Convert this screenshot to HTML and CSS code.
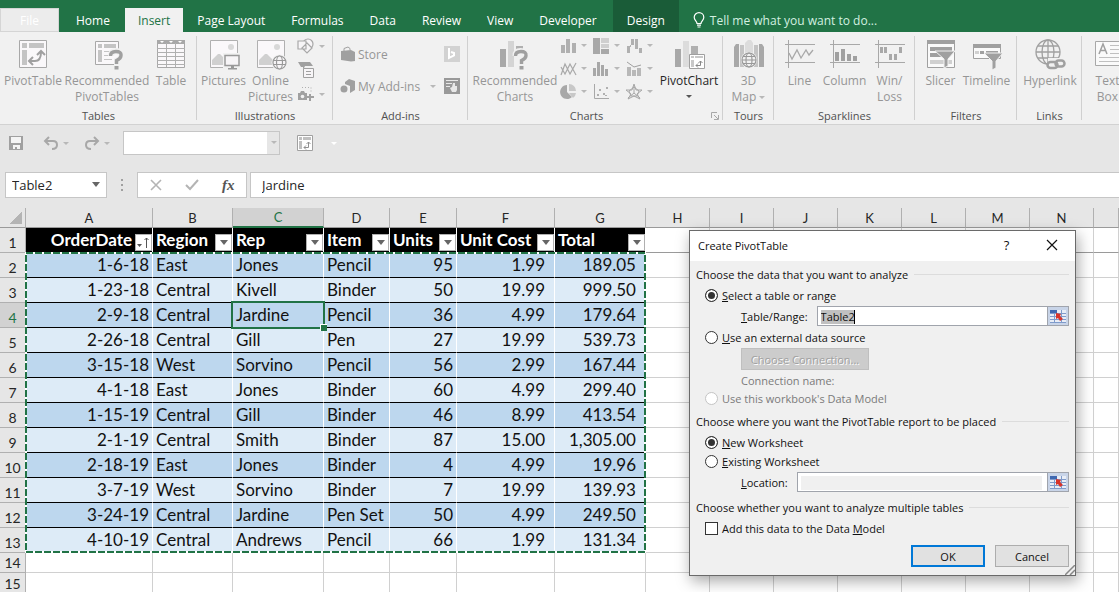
FILE: index.html
```html
<!DOCTYPE html>
<html lang="en">
<head>
    <meta charset="UTF-8">
    <meta name="viewport" content="width=device-width, initial-scale=1.0">
    <title>Create PivotTable</title>
    <link rel="stylesheet" href="styles.css">
</head>
<body>
    <nav class="tabs">
        <button class="tab file">File</button>
        <button class="tab">Home</button>
        <button class="tab active">Insert</button>
        <button class="tab">Page Layout</button>
        <button class="tab">Formulas</button>
        <button class="tab">Data</button>
        <button class="tab">Review</button>
        <button class="tab">View</button>
        <button class="tab">Developer</button>
        <button class="tab design">Design</button>
        <button class="tell-me">
            <svg width="12" height="16" viewBox="0 0 12 16" fill="none" stroke="#fff" stroke-width="1.2"><path d="M4 11.5C4 9 1.200 8.500 1.200 5.300a4.800 4.600 0 0 1 9.600 0C10.800 8.500 8 9 8 11.500zM4 13.200h4M4.500 15h3"/></svg>
            Tell me what you want to do...
        </button>
    </nav>

    <div class="ribbon">
        <section class="group g-tables">
            <div class="items">
                <button class="big w60">
                    <svg width="32" height="32" viewBox="0 0 32 32"><path fill="#faf8fa" stroke="#a8a8a8" d="M2.500 2.500h27v27h-27z"/><path fill="#c4c4c4" d="M5 5h5v5H5zM12 5h15v5H12zM5 12h5v15H5z"/><path fill="none" stroke="#a0a0a0" stroke-width="2" d="M13 23h5q6 0 6-9M16 19l-4 4 4 4M20 17l4-4 4 4"/></svg>
                    <span>PivotTable</span>
                </button>
                <button class="big w88">
                    <svg width="32" height="32" viewBox="0 0 32 32"><path fill="#faf8fa" stroke="#a8a8a8" d="M4.500 3.500h23v23h-23z"/><path fill="#c4c4c4" d="M7 6h4v4H7zM13 6h12v4H13zM7 12h4v12H7z"/><path stroke="#c4c4c4" d="M13 13.500h12M13 17.500h8M13 21.500h8"/><path fill="none" stroke="#f1f1f1" stroke-width="6" d="M20 18q0-5 5-5t5 5q0 3-4 4.500V27"/><path fill="none" stroke="#a0a0a0" stroke-width="3.400" d="M19.500 18q0-4.500 5.500-4.500t5 4q0 3-4.500 5V26"/><path fill="#a0a0a0" d="M23.500 28h4v3.500h-4z"/></svg>
                    <span>Recommended PivotTables</span>
                </button>
                <button class="big w40">
                    <svg width="32" height="32" viewBox="0 0 32 32"><path fill="#faf8fa" stroke="#a8a8a8" d="M2.500 2.500h27v27h-27z"/><path fill="#a8a8a8" d="M2 2h28v4H2z"/><path fill="none" stroke="#b0b0b0" d="M2 10.500h28M2 14.500h28M2 18.500h28M2 22.500h28M2 26.500h28M11.500 5v24M20.500 5v24"/><path fill="#fff" d="M5 3h4L7 5zM14 3h4l-2 2zM23 3h4l-2 2z"/></svg>
                    <span>Table</span>
                </button>
            </div>
            <h2>Tables</h2>
        </section>

        <section class="group g-illustrations">
            <div class="items">
                <button class="big w47">
                    <svg width="32" height="32" viewBox="0 0 32 32"><path fill="#faf8fa" stroke="#b0b0b0" d="M2.500 2.500h27v27h-27z"/><path fill="#d0d0d0" d="M4 27v-5l6-6h2l8 8v3z"/><circle cx="23" cy="9" r="3" fill="#d8d8d8"/><path fill="#f7f5f7" stroke="#f1f1f1" stroke-width="4" d="M17 17h15v11H17z"/><path fill="#f7f5f7" stroke="#999" stroke-width="1.500" d="M17 17.500h14v10H17z"/><path fill="#999" d="M23 28h3v2h3v1.500h-9V30h3z"/></svg>
                    <span>Pictures</span>
                </button>
                <button class="big w47">
                    <svg width="32" height="32" viewBox="0 0 32 32"><path fill="#faf8fa" stroke="#b0b0b0" d="M2.500 2.500h27v27h-27z"/><path fill="#d0d0d0" d="M4 27v-5l6-6h2l8 8v3z"/><circle cx="22" cy="9" r="3" fill="#d8d8d8"/><circle cx="24.500" cy="24.500" r="8" fill="#f1f1f1"/><g fill="#f7f5f7" stroke="#999" stroke-width="1.200"><circle cx="24.500" cy="24.500" r="6.500"/><ellipse cx="24.500" cy="24.500" rx="3" ry="6.500"/><path d="M18 22.500h13M18 26.500h13"/></g></svg>
                    <span>Online Pictures</span>
                </button>
                <div class="small-stack">
                    <button class="mini caret" aria-label="Shapes"><svg width="18" height="16" viewBox="0 0 18 16" fill="#f7f5f7" stroke="#a8a8a8" stroke-width="1.200"><circle cx="11" cy="6" r="5"/><path d="M1 3h8v8H1zM10 5l5 5-5 5-5-5z"/></svg></button>
                    <button class="mini" aria-label="SmartArt"><svg width="18" height="18" viewBox="0 0 18 18"><path fill="#a0a0a0" d="M1 1h12l3 4H8L6 9V6H4z"/><path fill="#f7f5f7" stroke="#a0a0a0" d="M6.500 7.500h10v9h-10zM9 10.500h5M9 13.500h5"/></svg></button>
                    <button class="mini caret" aria-label="Screenshot"><svg width="18" height="16" viewBox="0 0 18 16"><path fill="none" stroke="#b0b0b0" stroke-dasharray="1 2" d="M5 1.500h9v6"/><path fill="#a0a0a0" d="M1 7h2l1-2h3l1 2h2v7H1zM12 8h2v2h3v2h-3v3h-2v-3h-2v-2h2z"/><circle cx="5.500" cy="10.500" r="1.800" fill="#f1f1f1"/></svg></button>
                </div>
            </div>
            <h2>Illustrations</h2>
        </section>

        <section class="group g-addins">
            <div class="addins">
                <button class="line"><svg width="16" height="16" viewBox="0 0 16 16"><path fill="#a0a0a0" d="M1 5l10-1 4 2v9l-4 .5L1 14z"/><path fill="none" stroke="#a0a0a0" d="M4 5V2.500L8 1l2 1.500V4"/></svg>Store</button>
                <button class="mini" aria-label="Bing Maps"><svg width="16" height="16" viewBox="0 0 16 16"><path fill="#d2d2d2" d="M0 0h16v16H0z"/><path fill="none" stroke="#fff" stroke-width="2" d="M5 2v10l5-2.500V7L7 6"/></svg></button>
                <button class="line caret"><svg width="16" height="16" viewBox="0 0 16 16"><path fill="#a0a0a0" d="M5 4l4-3 6 2v9l-5 3V8L5 6z"/><circle cx="4" cy="11" r="3.500" fill="#a0a0a0"/></svg>My Add-ins</button>
                <button class="mini" aria-label="People Graph"><svg width="16" height="16" viewBox="0 0 16 16"><path fill="#999" d="M0 0h16v16H0z"/><path fill="#e8e8e8" d="M2 2h12v1H2zM2 5h6v1H2zM2 8h4v1H2zM9 5h2v3h2v4l-1 2H8l-2-4 2-1z"/></svg></button>
            </div>
            <h2>Add-ins</h2>
        </section>

        <section class="group g-charts">
            <div class="items">
                <button class="big w88">
                    <svg width="32" height="32" viewBox="0 0 32 32"><path fill="#a8a8a8" d="M1 11h6v18H1z"/><path fill="#d4d4d4" d="M9 3h6v26H9z"/><path fill="#b0b0b0" d="M17 8h7v8h-7z"/><path fill="none" stroke="#f1f1f1" stroke-width="6" d="M16.500 18q0-5 5-5t5 5q0 3-4 4.500V27"/><path fill="none" stroke="#a0a0a0" stroke-width="3.400" d="M16.500 18q0-4.500 5.500-4.500t5 4q0 3-4.500 5V26"/><path fill="#a0a0a0" d="M20.500 28h4v3.500h-4z"/></svg>
                    <span>Recommended Charts</span>
                </button>
                <div class="chart-grid">
                    <button class="mini caret" aria-label="Column chart"><svg width="17" height="16" viewBox="0 0 17 16"><path fill="#b0b0b0" d="M1 7h4v8H1zM6 1h4v14H6zM12 5h4v10h-4z"/></svg></button>
                    <button class="mini caret" aria-label="Hierarchy chart"><svg width="17" height="16" viewBox="0 0 17 16"><path fill="#a8a8a8" d="M0 0h7v16H0zM8 11h8v5H8z"/><path fill="#cfcfcf" d="M8 0h8v5H8zM8 6h8v4H8z"/></svg></button>
                    <button class="mini caret" aria-label="Waterfall chart"><svg width="17" height="16" viewBox="0 0 17 16"><path fill="#b0b0b0" d="M1 8h3v7H1zM5 1h3v6H5zM9 1h3v10H9zM13 10h3v5h-3zM4 7h1v2H4z"/></svg></button>
                    <button class="mini caret" aria-label="Line chart"><svg width="17" height="16" viewBox="0 0 17 16"><path fill="none" stroke="#a8a8a8" stroke-width="1.200" d="M1 14L5 3l5 10 6-11M1 6l4 7 5-10 6 11"/></svg></button>
                    <button class="mini caret" aria-label="Statistic chart"><svg width="17" height="16" viewBox="0 0 17 16"><path fill="#a8a8a8" d="M0 7h3v8H0zM4 1h3v14H4zM8 4h3v11H8zM12 8h3v7h-3z"/></svg></button>
                    <button class="mini caret" aria-label="Combo chart"><svg width="17" height="16" viewBox="0 0 17 16"><path fill="#b8b8b8" d="M1 6h4v9H1zM6 9h4v6H6zM11 7h4v8h-4z"/><path fill="none" stroke="#a0a0a0" d="M1 1l7 5 7-2"/></svg></button>
                    <button class="mini caret" aria-label="Pie chart"><svg width="17" height="16" viewBox="0 0 17 16"><path fill="#a8a8a8" d="M7 1v7l5 5A7 7 0 1 1 7 1z"/><path fill="#c8c8c8" d="M9 0a7 7 0 0 1 7 7H9zM16 9a7 7 0 0 1-3 5l-4-5z"/></svg></button>
                    <button class="mini caret" aria-label="Scatter chart"><svg width="17" height="16" viewBox="0 0 17 16"><path fill="none" stroke="#a8a8a8" d="M1.500 0v14.500H16"/><path fill="#b0b0b0" d="M4 10h2v2H4zM6 5h2v2H6zM10 9h2v2h-2zM13 3h2v2h-2zM12 11h2v1h-2z"/></svg></button>
                    <button class="mini caret" aria-label="Radar chart"><svg width="17" height="16" viewBox="0 0 17 16"><path fill="none" stroke="#a8a8a8" d="M8 0l2 6h6l-5 4 3 5-6-3-6 3 3-5-5-4h6zM8 3l5 4-2 5H5L3 7zM8 1v8M8 9l6 5M8 9l-6 5"/></svg></button>
                </div>
                <button class="big w60 enabled">
                    <svg width="32" height="32" viewBox="0 0 32 32"><path fill="#a8a8a8" d="M2 11h6v18H2z"/><path fill="#dcdcdc" d="M10 3h6v26h-6z"/><path fill="#b0b0b0" d="M18 8h7v8h-7z"/><path fill="#fff" stroke="#a0a0a0" d="M16.500 16.500h15v14h-15z"/><path fill="#c8c8c8" d="M18 18h3v2h-3zM22 18h8v2h-8zM18 22h3v7h-3z"/><path fill="none" stroke="#888" d="M23 27.500h4.500V23M25 25.500l-2 2 2 2M25.500 25l2-2 2 2"/></svg>
                    <span>PivotChart</span>
                    <i class="arrow"></i>
                </button>
            </div>
            <svg class="launcher" width="8" height="8" viewBox="0 0 8 8" fill="none" stroke="#a8a8a8"><path d="M.5 6V.500H6M3 3l4 4M7.500 3v4.500H3"/></svg>
            <h2>Charts</h2>
        </section>

        <section class="group g-tours">
            <div class="items">
                <button class="big w45">
                    <svg width="32" height="32" viewBox="0 0 32 32"><path fill="#a8a8a8" d="M1 9l2-3h3v23H1z"/><path fill="#c4c4c4" d="M7 7h4v22H7zM21 7h4v22h-4z"/><path fill="#dcdcdc" d="M12 5l3-3h3l2 3v12h-8z"/><path fill="#a8a8a8" d="M26 6h3l2 3v20h-5z"/><circle cx="16" cy="22" r="8" fill="#f1f1f1"/><g fill="none" stroke="#999" stroke-width="1.200"><circle cx="16" cy="22" r="7"/><ellipse cx="16" cy="22" rx="3" ry="7"/><path d="M9 22h14M10 18.500h12M10 25.500h12"/></g></svg>
                    <span>3D<br>Map <i class="tiny"></i></span>
                </button>
            </div>
            <h2>Tours</h2>
        </section>

        <section class="group g-spark">
            <div class="items">
                <button class="big w45">
                    <svg width="32" height="32" viewBox="0 0 32 32" fill="none" stroke="#a8a8a8"><path d="M1 6.500h30M1 24.500h30M4.500 2v28"/><path stroke-width="1.300" d="M5 15l3 6 5-9 4 8 5-8 3 5 4-5"/></svg>
                    <span>Line</span>
                </button>
                <button class="big w45">
                    <svg width="32" height="32" viewBox="0 0 32 32"><path stroke="#a8a8a8" d="M1 6.500h30M1 24.500h30M4.500 2v28"/><path fill="#a0a0a0" d="M6 14h4v9H6zM12 11h4v12h-4zM18 16h4v7h-4zM24 18h4v5h-4z"/></svg>
                    <span>Column</span>
                </button>
                <button class="big w45">
                    <svg width="32" height="32" viewBox="0 0 32 32"><path stroke="#a8a8a8" d="M1 6.500h30M1 24.500h30M4.500 2v28"/><path fill="#a8a8a8" d="M6 9h3v6H6zM10 9h3v6h-3zM15 16h3v6h-3zM20 16h3v6h-3zM25 9h3v6h-3z"/></svg>
                    <span>Win/<br>Loss</span>
                </button>
            </div>
            <h2>Sparklines</h2>
        </section>

        <section class="group g-filters">
            <div class="items">
                <button class="big w45">
                    <svg width="32" height="32" viewBox="0 0 32 32"><path fill="#fafafa" stroke="#a0a0a0" d="M2.500 2.500h27v27h-27z"/><path fill="#a0a0a0" d="M2 2h28v4H2zM5 9h22v4H5zM5 15h12v4H5z"/><path fill="#d0d0d0" d="M5 22h22v4H5z"/><path fill="#a0a0a0" stroke="#f1f1f1" d="M10 13h20l-7 8v7l-4 2v-9z"/></svg>
                    <span>Slicer</span>
                </button>
                <button class="big w47">
                    <svg width="32" height="32" viewBox="0 0 32 32"><path fill="#fafafa" stroke="#a0a0a0" d="M2.500 6.500h27v14h-27z"/><path fill="#a0a0a0" d="M2 6h28v4H2zM9 13h4v3H9zM15 13h12v3H15z"/><path fill="#d0d0d0" d="M4 13h4v3H4z"/><path fill="#a0a0a0" stroke="#f1f1f1" d="M13 15h19l-7 8v7l-4 2v-9z"/></svg>
                    <span>Timeline</span>
                </button>
            </div>
            <h2>Filters</h2>
        </section>

        <section class="group g-links">
            <div class="items">
                <button class="big w60">
                    <svg width="32" height="32" viewBox="0 0 32 32" fill="none" stroke="#a0a0a0"><g stroke-width="1.300"><circle cx="14" cy="14" r="12"/><ellipse cx="14" cy="14" rx="6" ry="12"/><path d="M2 14h24M4 8h20M4 20h20M14 2v24"/></g><path stroke="#f1f1f1" stroke-width="6" d="M17 23h12v6H17z"/><g stroke-width="2.500"><rect x="13.500" y="24" width="10" height="6" rx="3"/><rect x="21.500" y="22.500" width="9" height="6" rx="3"/></g></svg>
                    <span>Hyperlink</span>
                </button>
            </div>
            <h2>Links</h2>
        </section>

        <section class="group g-text">
            <div class="items">
                <button class="big w45">
                    <svg width="32" height="32" viewBox="0 0 32 32"><path fill="#fafafa" stroke="#a8a8a8" d="M3.500 3.500h28v24h-28z"/><path fill="none" stroke="#a0a0a0" stroke-width="1.500" d="M7 16l4-10 4 10M8.500 12.500h5"/><path stroke="#c0c0c0" d="M18 7.500h11M18 11.500h11M18 15.500h11M7 19.500h22M7 23.500h22"/></svg>
                    <span>Text<br>Box</span>
                </button>
            </div>
        </section>
    </div>

    <div class="quick">
        <button class="q-save" aria-label="Save"><svg width="14" height="14" viewBox="0 0 14 14"><path fill="#a0a0a0" d="M0 0h14v14H0z"/><path fill="#f4f4f4" d="M2 1h10v6H2zM4 9h7v4H8v-2H6v2H4z"/></svg></button>
        <button class="q-undo caret" aria-label="Undo"><svg width="16" height="14" viewBox="0 0 16 14" fill="none" stroke="#a8a8a8" stroke-width="2"><path d="M6 1L2 5l4 4M2 5h8q4 0 4 4t-5 4"/></svg></button>
        <button class="q-redo caret" aria-label="Redo"><svg width="16" height="14" viewBox="0 0 16 14" fill="none" stroke="#a8a8a8" stroke-width="2"><path d="M10 1l4 4-4 4M14 5H6Q2 5 2 9t5 4"/></svg></button>
        <div class="q-font"><select aria-label="Font"><option></option></select></div>
        <button class="q-pivot" aria-label="PivotTable"><svg width="16" height="16" viewBox="0 0 16 16"><path fill="#fff" stroke="#a0a0a0" d="M.5.500h15v15H.500z"/><path fill="#c0c0c0" d="M2 2h3v3H2zM6 2h8v3H6zM2 6h3v8H2z"/><path fill="none" stroke="#909090" d="M7 12.500h4.500V7M9 10.500l-2 2 2 2M9.500 9l2-2 2 2"/></svg></button>
        <i class="tiny white"></i>
    </div>

    <div class="formula-bar">
        <div class="name-box"><select aria-label="Name box"><option>Table2</option></select></div>
        <div class="dots"><i></i><i></i><i></i></div>
        <div class="fx">
            <button aria-label="Cancel"><svg width="12" height="12" viewBox="0 0 12 12" stroke="#b4b4b4" stroke-width="1.600"><path d="M1 1l10 10M11 1L1 11"/></svg></button>
            <button aria-label="Enter"><svg width="14" height="12" viewBox="0 0 14 12" fill="none" stroke="#b4b4b4" stroke-width="2"><path d="M1 6l4 4 8-9"/></svg></button>
            <button class="fn" aria-label="Insert function">fx</button>
        </div>
        <input class="formula" type="text" value="Jardine" aria-label="Formula">
    </div>

    <main class="sheet">
        <table>
            <colgroup>
                <col class="c-num"><col class="c-a"><col class="c-b"><col class="c-c"><col class="c-d"><col class="c-e"><col class="c-f"><col class="c-g">
                <col class="c-n"><col class="c-n"><col class="c-n"><col class="c-n"><col class="c-n"><col class="c-n"><col class="c-n"><col>
            </colgroup>
            <thead>
                <tr><th class="corner"></th><th>A</th><th>B</th><th class="current">C</th><th>D</th><th>E</th><th>F</th><th>G</th><th>H</th><th>I</th><th>J</th><th>K</th><th>L</th><th>M</th><th>N</th><th></th></tr>
            </thead>
            <tbody>
                <tr class="titles">
                    <th>1</th>
                    <td><div class="end">OrderDate<button class="filter sorted" aria-label="Filter OrderDate"><svg width="13" height="13" viewBox="0 0 13 13"><path fill="#555" d="M0 8h5l-2.500 3z"/><path fill="none" stroke="#555" d="M9.500 12V2M7.500 4l2-2 2 2"/></svg></button></div></td>
                    <td><div>Region<button class="filter" aria-label="Filter Region"></button></div></td>
                    <td><div>Rep<button class="filter" aria-label="Filter Rep"></button></div></td>
                    <td><div>Item<button class="filter" aria-label="Filter Item"></button></div></td>
                    <td><div>Units<button class="filter" aria-label="Filter Units"></button></div></td>
                    <td><div>Unit Cost<button class="filter" aria-label="Filter Unit Cost"></button></div></td>
                    <td><div>Total<button class="filter" aria-label="Filter Total"></button></div></td>
                    <td></td><td></td><td></td><td></td><td></td><td></td><td></td><td></td>
                </tr>
                <tr class="data"><th>2</th><td>1-6-18</td><td>East</td><td>Jones</td><td>Pencil</td><td>95</td><td>1.99</td><td>189.05</td><td></td><td></td><td></td><td></td><td></td><td></td><td></td><td></td></tr>
                <tr class="data"><th>3</th><td>1-23-18</td><td>Central</td><td>Kivell</td><td>Binder</td><td>50</td><td>19.99</td><td>999.50</td><td></td><td></td><td></td><td></td><td></td><td></td><td></td><td></td></tr>
                <tr class="data"><th class="current">4</th><td>2-9-18</td><td>Central</td><td class="selected">Jardine</td><td>Pencil</td><td>36</td><td>4.99</td><td>179.64</td><td></td><td></td><td></td><td></td><td></td><td></td><td></td><td></td></tr>
                <tr class="data"><th>5</th><td>2-26-18</td><td>Central</td><td>Gill</td><td>Pen</td><td>27</td><td>19.99</td><td>539.73</td><td></td><td></td><td></td><td></td><td></td><td></td><td></td><td></td></tr>
                <tr class="data"><th>6</th><td>3-15-18</td><td>West</td><td>Sorvino</td><td>Pencil</td><td>56</td><td>2.99</td><td>167.44</td><td></td><td></td><td></td><td></td><td></td><td></td><td></td><td></td></tr>
                <tr class="data"><th>7</th><td>4-1-18</td><td>East</td><td>Jones</td><td>Binder</td><td>60</td><td>4.99</td><td>299.40</td><td></td><td></td><td></td><td></td><td></td><td></td><td></td><td></td></tr>
                <tr class="data"><th>8</th><td>1-15-19</td><td>Central</td><td>Gill</td><td>Binder</td><td>46</td><td>8.99</td><td>413.54</td><td></td><td></td><td></td><td></td><td></td><td></td><td></td><td></td></tr>
                <tr class="data"><th>9</th><td>2-1-19</td><td>Central</td><td>Smith</td><td>Binder</td><td>87</td><td>15.00</td><td>1,305.00</td><td></td><td></td><td></td><td></td><td></td><td></td><td></td><td></td></tr>
                <tr class="data"><th>10</th><td>2-18-19</td><td>East</td><td>Jones</td><td>Binder</td><td>4</td><td>4.99</td><td>19.96</td><td></td><td></td><td></td><td></td><td></td><td></td><td></td><td></td></tr>
                <tr class="data"><th>11</th><td>3-7-19</td><td>West</td><td>Sorvino</td><td>Binder</td><td>7</td><td>19.99</td><td>139.93</td><td></td><td></td><td></td><td></td><td></td><td></td><td></td><td></td></tr>
                <tr class="data"><th>12</th><td>3-24-19</td><td>Central</td><td>Jardine</td><td>Pen Set</td><td>50</td><td>4.99</td><td>249.50</td><td></td><td></td><td></td><td></td><td></td><td></td><td></td><td></td></tr>
                <tr class="data"><th>13</th><td>4-10-19</td><td>Central</td><td>Andrews</td><td>Pencil</td><td>66</td><td>1.99</td><td>131.34</td><td></td><td></td><td></td><td></td><td></td><td></td><td></td><td></td></tr>
                <tr class="blank"><th>14</th><td></td><td></td><td></td><td></td><td></td><td></td><td></td><td></td><td></td><td></td><td></td><td></td><td></td><td></td><td></td></tr>
                <tr class="blank"><th>15</th><td></td><td></td><td></td><td></td><td></td><td></td><td></td><td></td><td></td><td></td><td></td><td></td><td></td><td></td><td></td></tr>
            </tbody>
        </table>
        <!-- marching ants round A2:G13 -->
        <svg class="marquee" fill="none" stroke-width="2"><rect x="1" y="1" width="619" height="299" stroke="#fff"/><rect x="1" y="1" width="619" height="299" stroke="#217346" stroke-dasharray="7 2"/></svg>
    </main>

    <form class="dialog" onsubmit="return false">
        <header>
            <h1>Create PivotTable</h1>
            <button type="button" aria-label="Help">?</button>
            <button type="button" aria-label="Close"><svg width="12" height="12" viewBox="0 0 12 12" stroke="#111" stroke-width="1.200"><path d="M1 1l10 10M11 1L1 11"/></svg></button>
        </header>
        <div class="content">
            <h2>Choose the data that you want to analyze</h2>
            <label class="option"><input type="radio" name="source" checked><span><u>S</u>elect a table or range</span></label>
            <div class="field">
                <label for="range"><u>T</u>able/Range:</label>
                <div class="box range"><span class="sel"><input id="range" type="text" value="Table2"></span><button type="button" class="pick" aria-label="Pick range"><svg width="18" height="15" viewBox="0 0 18 15"><path fill="#e8edf6" d="M1 1h16v13H1z"/><path fill="#3f68b0" d="M1 1h7v3H1z"/><path fill="none" stroke="#7f9bcb" d="M1 4.500h16M1 7.500h16M1 10.500h16M1 13.500h16M5.500 4v10M12.500 1v13"/><path fill="#d8332a" d="M7 4l5 1-1 2 3 3-3 2-2-3-2 1z"/></svg></button></div>
            </div>
            <label class="option"><input type="radio" name="source"><span><u>U</u>se an external data source</span></label>
            <button type="button" class="connection" disabled>Choose Connection...</button>
            <p>Connection name:</p>
            <label class="option short off"><input type="radio" name="source" disabled><span>Use this workbook's Data Model</span></label>

            <h2>Choose where you want the PivotTable report to be placed</h2>
            <label class="option"><input type="radio" name="place" checked><span><u>N</u>ew Worksheet</span></label>
            <label class="option short"><input type="radio" name="place"><span><u>E</u>xisting Worksheet</span></label>
            <div class="field location">
                <label for="location"><u>L</u>ocation:</label>
                <div class="box"><input id="location" type="text" disabled><button type="button" class="pick" aria-label="Pick location"><svg width="18" height="15" viewBox="0 0 18 15"><path fill="#e8edf6" d="M1 1h16v13H1z"/><path fill="#3f68b0" d="M1 1h7v3H1z"/><path fill="none" stroke="#7f9bcb" d="M1 4.500h16M1 7.500h16M1 10.500h16M1 13.500h16M5.500 4v10M12.500 1v13"/><path fill="#d8332a" d="M7 4l5 1-1 2 3 3-3 2-2-3-2 1z"/></svg></button></div>
            </div>

            <h2>Choose whether you want to analyze multiple tables</h2>
            <label class="option"><input type="checkbox"><span>Add this data to the Data <u>M</u>odel</span></label>
            <footer>
                <button class="ok">OK</button>
                <button type="button">Cancel</button>
            </footer>
        </div>
        <svg class="grip" width="10" height="10" viewBox="0 0 10 10" stroke="#888" stroke-width="1.500"><path d="M0 10L10 0M5 10l5-5"/></svg>
    </form>
</body>
</html>
```
FILE: styles.css
```css
* {
    box-sizing: border-box;
}

body {
    margin: 0;
    min-height: 100vh;
    background: #e6e6e6;
    font-family: "Open Sans", "Noto Sans", sans-serif;
    font-size: 12px;
    color: #262626;
    overflow: hidden;
}

button, input, select {
    font: inherit;
    color: inherit;
    margin: 0;
    padding: 0;
    border: none;
    border-radius: 0;
    background: none;
    appearance: none;
}

h1, h2, p {
    margin: 0;
    font-size: inherit;
    font-weight: normal;
}

svg {
    display: block;
    flex: none;
}

/* tabs */
.tabs {
    display: flex;
    height: 32px;
    padding-top: 8px;
    background: #217346;
    color: #fff;
    white-space: nowrap;
}

.tab {
    padding: 0 13px;
}

.tab.file {
    width: 59px;
    margin-right: 4px;
    background: #ececec;
    border: 1px solid #d5d5d5;
}

.tab.active {
    margin: 0 1px 0 2px;
    background: #f1f1f1;
    color: #217346;
}

.tab.design {
    margin: -8px 0 0 3px;
    padding: 8px 14px 0;
    background: #1a5c38;
}

.tell-me {
    display: flex;
    align-items: center;
    gap: 5px;
    margin-left: 14px;
    color: #d3f0e0;
}

/* ribbon */
.ribbon {
    display: flex;
    height: 93px;
    background: #f1f1f1;
    border-bottom: 1px solid #d2d2d2;
    color: #969696;
    overflow: hidden;
}

.group {
    position: relative;
    flex: none;
    display: flex;
    flex-direction: column;
    justify-content: space-between;
    padding-top: 6px;
}

.group::after {
    content: "";
    position: absolute;
    right: 0;
    top: 4px;
    bottom: 4px;
    border-right: 1px solid #d0d0d0;
}

.group h2 {
    color: #505050;
    text-align: center;
    font-size: 11px;
    line-height: 16px;
}

.g-tables { width: 197px; }
.g-illustrations { width: 136px; }
.g-addins { width: 135px; }
.g-charts { width: 255px; }
.g-tours { width: 51px; }
.g-spark { width: 141px; }
.g-filters { width: 102px; }
.g-links { width: 65px; }
.g-text { width: 60px; }

.g-charts h2 {
    padding-right: 18px;
}

.g-text::after {
    display: none;
}

.items {
    display: flex;
    padding-left: 3px;
}

.big {
    display: flex;
    flex-direction: column;
    align-items: center;
    justify-content: flex-start;
    flex: none;
    line-height: 16px;
}

.big span {
    margin-top: 3px;
}

.enabled {
    color: #262626;
}

.w40 { width: 40px; }
.w45 { width: 45px; }
.w47 { width: 47px; }
.w60 { width: 60px; }
.w88 { width: 88px; }

.arrow, .tiny, .caret::after {
    content: "";
    display: inline-block;
    border: 3px solid transparent;
    border-top-color: #b8b8b8;
    border-bottom: none;
}

.arrow {
    margin-top: 6px;
    border-top-color: #555;
}

.tiny {
    vertical-align: middle;
}

.tiny.white {
    border-top-color: #fff;
}

.mini {
    display: flex;
    align-items: center;
}

.caret::after {
    margin-left: 4px;
}

.small-stack {
    display: grid;
    grid-template-rows: repeat(3, 24px);
    margin-top: -4px;
    padding-left: 3px;
}

.addins {
    display: grid;
    grid-template-columns: 1fr 16px;
    grid-template-rows: 32px 32px;
    padding: 0 8px 0 7px;
}

.line {
    display: flex;
    align-items: center;
    gap: 2px;
    white-space: nowrap;
}

.line.caret::after {
    margin-left: 8px;
}

.chart-grid {
    display: grid;
    grid-template-columns: repeat(3, 33px);
    grid-template-rows: repeat(3, 23px);
    margin-top: -4px;
    padding-left: 1px;
}

.launcher {
    position: absolute;
    right: 4px;
    bottom: 4px;
}

/* quick access toolbar */
.quick {
    display: flex;
    align-items: center;
    height: 36px;
    padding-left: 9px;
}

.quick button {
    display: flex;
    align-items: center;
}

.q-save { width: 34px; }
.q-undo { width: 41px; }
.q-redo { width: 39px; }
.q-pivot { width: 34px; }

.q-font, .name-box {
    position: relative;
    background: #fff;
    border: 1px solid #c6c6c6;
}

.q-font {
    width: 157px;
    height: 24px;
    margin-right: 17px;
    border-right: 13px solid #e6e6e6;
    outline: 1px solid #c6c6c6;
    outline-offset: -1px;
}

.q-font select, .name-box select {
    width: 100%;
    height: 100%;
    padding-left: 6px;
}

.q-font::after, .name-box::after {
    content: "";
    position: absolute;
    top: 9px;
    right: -10px;
    border: 3px solid transparent;
    border-top-color: #b8b8b8;
    border-bottom: none;
}

/* formula bar */
.formula-bar {
    display: flex;
    height: 47px;
    padding: 11px 0 10px 5px;
    font-size: 13px;
}

.name-box {
    width: 102px;
}

.name-box::after {
    right: 6px;
    border-width: 5px 4px 0;
    border-top-color: #666;
}

.dots {
    display: flex;
    flex-direction: column;
    justify-content: center;
    align-items: center;
    gap: 3px;
    width: 30px;
}

.dots i {
    width: 2px;
    height: 2px;
    background: #a0a0a0;
}

.fx {
    display: flex;
    justify-content: space-around;
    align-items: center;
    width: 110px;
    margin-right: 3px;
    background: #fff;
    border: 1px solid #c6c6c6;
}

.fn {
    font: italic bold 15px/15px "Liberation Serif", serif;
    color: #555;
}

.formula {
    flex: 1;
    min-width: 0;
    padding-left: 11px;
    background: #fff;
    border: 1px solid #c6c6c6;
    border-right: none;
}

/* sheet */
.sheet {
    position: relative;
    font-family: Lato, "Open Sans", sans-serif;
}

table {
    width: 100%;
    table-layout: fixed;
    border-collapse: separate;
    border-spacing: 0;
    background: #fff;
}

.c-num { width: 26px; }
.c-a { width: 127px; }
.c-b { width: 80px; }
.c-c { width: 91px; }
.c-d { width: 66px; }
.c-e { width: 67px; }
.c-f { width: 98px; }
.c-g { width: 91px; }
.c-n { width: 64px; }

th, td {
    padding: 0;
    font-weight: normal;
    white-space: nowrap;
    border-right: 1px solid #d0d0d0;
    border-bottom: 1px solid #d0d0d0;
}

thead th {
    height: 20px;
    background: #e6e6e6;
    border-color: #b0b0b0;
    border-bottom-color: #9a9a9a;
    font-size: 13px;
    line-height: 18px;
}

th.current {
    background: #d2d2d2;
    color: #217346;
}

thead th.current {
    border-bottom: 2px solid #217346;
    line-height: 17px;
}

tbody th.current {
    border-right-color: #217346;
}

.corner {
    background: linear-gradient(135deg, #e6e6e6 50%, #b4b4b4 50%) no-repeat 10px 4px / 12px 12px #e6e6e6;
}

tbody th {
    background: #e6e6e6;
    border-color: #b0b0b0;
    font-size: 14px;
    line-height: 18px;
    vertical-align: bottom;
}

.titles td, .data td {
    height: 25px;
    font-size: 17px;
    line-height: 24px;
}

.titles td {
    border-bottom-color: #9a9a9a;
}

.blank td {
    height: 20px;
}

.blank:last-child td, .blank:last-child th {
    border-bottom: none;
}

.titles td:nth-child(-n+8) {
    background: #000;
    border-right-color: #fff;
    border-bottom-color: #000;
    color: #fff;
    font-weight: bold;
}

.titles div {
    display: flex;
    align-items: center;
    justify-content: space-between;
    height: 24px;
    padding-left: 3px;
}

.titles .end {
    justify-content: flex-end;
    gap: 3px;
}

.filter {
    display: flex;
    align-items: center;
    justify-content: center;
    flex: none;
    width: 17px;
    height: 17px;
    margin-top: 5px;
    background: #fff;
    border: 1px solid #b0b0b0;
}

.filter:empty::after {
    content: "";
    border: 4px solid transparent;
    border-top: 5px solid #666;
    border-bottom: none;
}

.data td:nth-child(-n+8) {
    padding-left: 3px;
    border-right-color: #fff;
    border-bottom-color: #000;
    background: #ddebf7;
    color: #111;
}

.data:nth-child(even) td:nth-child(-n+8) {
    background: #bdd7ee;
}

.data td:nth-child(2), .data td:nth-child(6) {
    padding-right: 3px;
    text-align: right;
}

.data td:nth-child(7), .data td:nth-child(8) {
    padding-right: 9px;
    text-align: right;
}

.selected {
    position: relative;
}

.selected::before {
    content: "";
    position: absolute;
    inset: -2px;
    border: 2px solid #217346;
}

.selected::after {
    content: "";
    position: absolute;
    right: -4px;
    bottom: -4px;
    width: 6px;
    height: 6px;
    background: #217346;
    border: 1px solid #fff;
    border-width: 1px 0 0 1px;
}

.marquee {
    position: absolute;
    left: 25px;
    top: 44px;
    width: 621px;
    height: 301px;
}

/* dialog */
.dialog {
    position: absolute;
    left: 689px;
    top: 230px;
    width: 387px;
    background: #f0f0f0;
    border: 1px solid #6a6a6a;
    box-shadow: 2px 5px 14px rgba(0, 0, 0, 0.35);
    color: #111;
    font-size: 11px;
}

.dialog header {
    display: flex;
    align-items: center;
    height: 30px;
    padding: 0 1px 2px 8px;
    background: #fff;
}

.dialog h1 {
    flex: 1;
}

.dialog header button {
    display: flex;
    align-items: center;
    justify-content: center;
    width: 45px;
    font-size: 13px;
}

.content {
    padding: 3px 6px 8px;
}

.content h2 {
    display: flex;
    align-items: center;
    gap: 6px;
    height: 20px;
    white-space: nowrap;
}

.content h2:not(:first-child) {
    margin-top: 5px;
}

.content h2::after {
    content: "";
    flex: 1;
    border-top: 1px solid #dcdcdc;
}

.option {
    display: flex;
    align-items: center;
    gap: 4px;
    height: 22px;
    padding-left: 9px;
}

.option.short {
    height: 16px;
}

.option input {
    width: 13px;
    height: 13px;
    background: #fff;
    border: 1px solid #333;
}

.option input[type="radio"] {
    border-radius: 50%;
}

.option input:checked {
    background: #333;
    box-shadow: inset 0 0 0 2px #fff;
}

.option.off, .content p {
    color: #7a7a7a;
}

.off input {
    border-color: #c4c4c4;
}

.field {
    display: flex;
    align-items: center;
    gap: 9px;
    height: 20px;
    padding-left: 45px;
}

.location {
    margin-top: 3px;
}

.box {
    display: flex;
    flex: 1;
    height: 20px;
    background: #fff;
    border: 1px solid #a0a4ac;
}

.sel {
    flex: 1;
    padding: 2px 3px;
}

.sel input {
    width: 34px;
    height: 14px;
    background: #c0c0c0;
    border-right: 1px solid #000;
}

#location {
    flex: 1;
    min-width: 0;
    margin: 3px 5px 1px 3px;
    background: #f0f0f0;
}

.pick {
    display: flex;
    align-items: center;
    justify-content: center;
    width: 21px;
    background: #c8d4e8;
    border-left: 1px solid #a0a4ac;
}

.connection {
    display: block;
    width: 128px;
    height: 22px;
    margin-left: 45px;
    background: #ccc;
    border: 1px solid #bfbfbf;
    color: #a0a0a0;
    text-shadow: 1px 1px #fff;
}

.content p {
    height: 20px;
    padding-left: 45px;
    line-height: 21px;
}

footer {
    display: flex;
    justify-content: flex-end;
    gap: 10px;
    margin-top: 6px;
}

footer button {
    width: 74px;
    height: 22px;
    background: #e1e1e1;
    border: 1px solid #adadad;
}

footer .ok {
    border: 2px solid #0078d7;
}

.grip {
    position: absolute;
    right: 0;
    bottom: 0;
}
```
